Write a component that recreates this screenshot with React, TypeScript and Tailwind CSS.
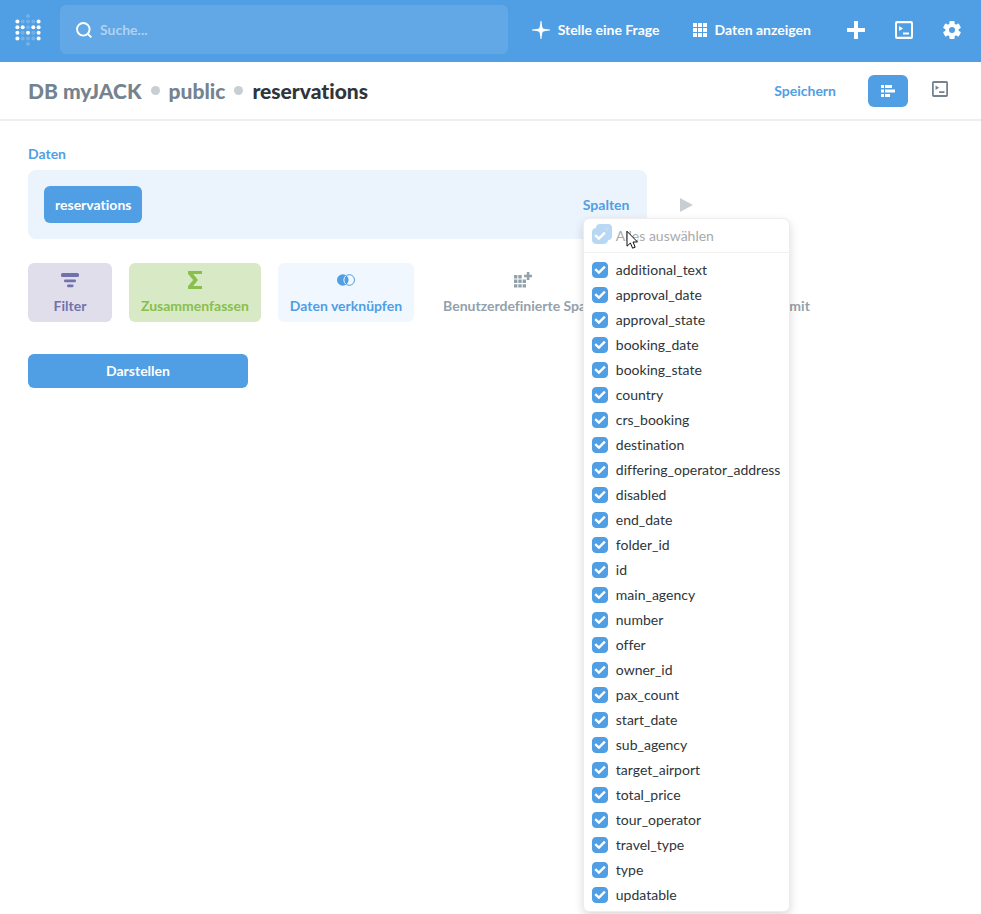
import { ReactNode, useState } from "react";
import clsx from "clsx";

const COLUMNS = [
  "additional_text",
  "approval_date",
  "approval_state",
  "booking_date",
  "booking_state",
  "country",
  "crs_booking",
  "destination",
  "differing_operator_address",
  "disabled",
  "end_date",
  "folder_id",
  "id",
  "main_agency",
  "number",
  "offer",
  "owner_id",
  "pax_count",
  "start_date",
  "sub_agency",
  "target_airport",
  "total_price",
  "tour_operator",
  "travel_type",
  "type",
  "updatable",
];

const LOGO_ROWS = ["  o  ", "XoooX", "XXoXX", "XoXoX", "XoooX", "  o  "];

function LogoIcon() {
  return (
    <svg width="26" height="32" viewBox="0 0 26 32" fill="#fff">
      {LOGO_ROWS.map((row, y) =>
        row
          .split("")
          .map((dot, x) =>
            dot === " " ? null : (
              <circle
                key={`${x}-${y}`}
                cx={2.4 + x * 5.3}
                cy={2 + y * 5.6}
                r="2"
                opacity={dot === "X" ? 1 : 0.2}
              />
            ),
          ),
      )}
    </svg>
  );
}

function SearchIcon() {
  return (
    <svg
      className="shrink-0"
      width="16"
      height="16"
      viewBox="0 0 16 16"
      fill="none"
      stroke="#fff"
      strokeWidth="1.9"
    >
      <circle cx="7.3" cy="7.3" r="6.3" />
      <path d="M11.6 11.6 15.4 15.4" />
    </svg>
  );
}

function SparkIcon() {
  return (
    <svg width="18" height="18" viewBox="0 0 18 18" fill="currentColor">
      <path d="M8.5 0h1C9.9 4 10.2 6.200 10.800 7.200 11.800 7.800 14 8.100 18 8.500v1C14 9.900 11.800 10.200 10.800 10.800 10.200 11.800 9.900 14 9.500 18h-1C8.100 14 7.800 11.800 7.200 10.800 6.200 10.200 4 9.900 0 9.500v-1C4 8.100 6.200 7.800 7.200 7.200 7.800 6.200 8.100 4 8.500 0Z" />
    </svg>
  );
}

function GridIcon() {
  return (
    <svg width="14" height="14" viewBox="0 0 14 14" fill="currentColor">
      {[0, 5, 10].map((y) =>
        [0, 5, 10].map((x) => <rect key={`${x}-${y}`} x={x} y={y} width="4" height="4" />),
      )}
    </svg>
  );
}

function PlusIcon() {
  return (
    <svg width="18" height="18" viewBox="0 0 18 18" fill="currentColor">
      <path d="M7 0h4v7h7v4h-7v7H7v-7H0V7h7z" />
    </svg>
  );
}

function SqlIcon({ size = 18 }: { size?: number }) {
  return (
    <svg width={size} height={size} viewBox="0 0 18 18" fill="currentColor">
      <path
        fillRule="evenodd"
        d="M2 0h14a2 2 0 0 1 2 2v14a2 2 0 0 1-2 2H2a2 2 0 0 1-2-2V2a2 2 0 0 1 2-2zm0 2.200v13.600h14V2.200z"
      />
      <path d="M4 5 8 7.500 4 10z" />
      <path d="M8 11.5h6v2H8z" />
    </svg>
  );
}

function GearIcon() {
  return (
    <svg width="18" height="18" viewBox="0 0 18 18" fill="currentColor">
      {[0, 60, 120].map((angle) => (
        <rect
          key={angle}
          x="6.4"
          y="0"
          width="5.2"
          height="18"
          rx="1"
          transform={`rotate(${angle} 9 9)`}
        />
      ))}
      <circle cx="9" cy="9" r="6.7" />
      <circle cx="9" cy="9" r="3" fill="#509ee3" />
    </svg>
  );
}

function NotebookIcon() {
  return (
    <svg width="14" height="12" viewBox="0 0 14 12" fill="currentColor">
      <path d="M0 0h3v3H0zM4 0h7v3H4zM0 4.6h3v3H0zM4 4.6h10v3H4zM0 9h3v3H0zM4 9h5v3H4z" />
    </svg>
  );
}

function FilterIcon() {
  return (
    <svg width="18" height="18" viewBox="0 0 18 18" fill="currentColor">
      <rect x="0" y="2" width="18" height="4" rx="1.5" />
      <rect x="3" y="8.6" width="12" height="2.6" rx="1.2" />
      <rect x="6" y="13.5" width="6.5" height="2.8" rx="1.2" />
    </svg>
  );
}

function SumIcon() {
  return (
    <svg width="18" height="18" viewBox="0 0 18 18" fill="currentColor">
      <path d="M2 0H16V3H7.2L12 9L7.2 15H16V18H2V15.2L7.2 9L2 2.8Z" />
    </svg>
  );
}

function JoinIcon() {
  return (
    <svg width="18" height="18" viewBox="0 0 18 18">
      <circle cx="12.2" cy="9" r="5.3" fill="none" stroke="currentColor" strokeWidth="1" />
      <circle cx="5.8" cy="9" r="5.8" fill="currentColor" />
      <path d="M9.2 4.6a5.3 5.3 0 0 0 0 8.8" fill="none" stroke="#f1f7ff" strokeWidth="1" />
    </svg>
  );
}

function AddColumnIcon() {
  return (
    <svg width="18" height="18" viewBox="0 0 18 18" fill="currentColor">
      <path d="M0 4h3.4v3.4H0zM4.3 4h3.4v3.4H4.3zM0 8.6h3.4V12H0zM4.3 8.6h3.4V12H4.3zM8.6 8.6H12V12H8.6zM0 13.2h3.4v3.2H0zM4.3 13.2h3.4v3.2H4.3zM8.6 13.2H12v3.2H8.6z" />
      <path d="M12.8 1h2.6v2.7H18v2.6h-2.6v2.6h-2.6V6.3h-2.7V3.7h2.7z" />
    </svg>
  );
}

function SortIcon() {
  return (
    <svg width="18" height="18" viewBox="0 0 18 18" fill="currentColor">
      <path d="M2 2h8v2H2zM2 8h6v2H2zM2 14h4v2H2zM13 2h2v10h2l-3 4-3-4h2z" />
    </svg>
  );
}

function LimitIcon() {
  return (
    <svg width="18" height="18" viewBox="0 0 18 18" fill="currentColor">
      <path d="M2 2h14v2H2zM2 7h14v2H2zM4 12h2v2H4zM8 12h2v2H8zM12 12h2v2h-2z" />
    </svg>
  );
}

function CursorIcon() {
  return (
    <svg width="13" height="20" viewBox="0 0 13 20" fill="#fff" stroke="#111" strokeWidth="1">
      <path d="M1 1.3V16.2L4.4 13 6.6 18.2 9.2 17.2 7 12H11.5Z" />
    </svg>
  );
}

interface CheckProps {
  id: string;
  checked: boolean;
  disabled?: boolean;
  onChange?: () => void;
}

function Check({ id, checked, disabled, onChange }: CheckProps) {
  return (
    <span className="relative block size-4">
      <input
        id={id}
        type="checkbox"
        className="block size-4 appearance-none rounded border border-[#b8bbc3] bg-white checked:border-[#509ee3] checked:bg-[#509ee3]"
        checked={checked}
        disabled={disabled}
        onChange={onChange}
      />
      {checked && (
        <svg
          className="pointer-events-none absolute inset-0"
          width="16"
          height="16"
          viewBox="0 0 16 16"
          fill="none"
          stroke="#fff"
          strokeWidth="2.4"
        >
          <path d="M3.2 7.2 6.9 10.6 12.9 4.7" />
        </svg>
      )}
    </span>
  );
}

function ColumnPicker() {
  const [hidden, setHidden] = useState<string[]>([]);

  const toggle = (name: string) => {
    setHidden(
      hidden.includes(name) ? hidden.filter((item) => item !== name) : [...hidden, name],
    );
  };

  return (
    <div className="absolute top-full left-0 z-10 rounded-md border border-[#eeecec] bg-white shadow-[0_4px_10px_rgba(0,0,0,0.15)]">
      <div className="relative border-b border-[#f0f0f0] px-2 pt-[7px] pb-1.5">
        <label htmlFor="all" className="flex items-center gap-2 text-sm leading-5">
          <span className="relative block size-4">
            <span className="absolute -top-1 left-1 size-4 rounded bg-[#b9d8f4]" />
            <span className="absolute inset-0 rounded bg-white" />
            <span className="relative block opacity-40">
              <Check id="all" checked={hidden.length === 0} disabled />
            </span>
          </span>
          <span className="text-[#a8aaac]">Alles auswählen</span>
        </label>
        <span className="pointer-events-none absolute top-[11px] left-[42px]">
          <CursorIcon />
        </span>
      </div>
      <ul className="pt-[5px] pb-[3px]">
        {COLUMNS.map((name) => (
          <li key={name}>
            <label
              htmlFor={name}
              className="flex h-[25px] items-center gap-2 pr-[9px] pl-2 text-sm whitespace-nowrap text-[#2e353b]"
            >
              <Check id={name} checked={!hidden.includes(name)} onChange={() => toggle(name)} />
              {name}
            </label>
          </li>
        ))}
      </ul>
    </div>
  );
}

interface ActionButtonProps {
  icon: ReactNode;
  label: string;
  className: string;
}

function ActionButton({ icon, label, className }: ActionButtonProps) {
  return (
    <button
      type="button"
      className={clsx(
        "flex h-[59px] min-w-[84px] shrink-0 flex-col items-center gap-[5px] rounded-md px-3 pt-2 text-sm leading-6 font-bold whitespace-nowrap",
        className,
      )}
    >
      {icon}
      {label}
    </button>
  );
}

export default function App() {
  return (
    <div className="min-h-screen overflow-x-hidden bg-white font-['Lato','Liberation_Sans',sans-serif] text-sm text-[#2e353b] [font-variant-ligatures:none]">
      <header className="flex h-[62px] items-center bg-[#509ee3] pr-5 pb-0.5 pl-[15px] text-white">
        <a href="#" aria-label="Startseite" className="mr-[19px] shrink-0">
          <LogoIcon />
        </a>
        <label className="mr-6 -mt-px flex h-[49px] max-w-[800px] flex-1 items-center gap-2 rounded-md bg-[#62a8e6] px-4">
          <SearchIcon />
          <input
            type="text"
            aria-label="Suche"
            placeholder="Suche..."
            className="w-full min-w-0 bg-transparent font-bold text-white outline-none placeholder:text-[#b0d2f2]"
          />
        </label>
        <nav className="ml-auto flex shrink-0 items-center font-bold whitespace-nowrap">
          <a href="#" className="mr-[33px] flex items-center gap-2">
            <SparkIcon />
            Stelle eine Frage
          </a>
          <a href="#" className="mr-9 flex items-center gap-2">
            <GridIcon />
            Daten anzeigen
          </a>
          <div className="flex items-center gap-[30px]">
            <button type="button" aria-label="Neu">
              <PlusIcon />
            </button>
            <button type="button" aria-label="SQL">
              <SqlIcon />
            </button>
            <button type="button" aria-label="Einstellungen">
              <GearIcon />
            </button>
          </div>
        </nav>
      </header>

      <div className="flex h-[59px] items-center justify-between border-b-2 border-[#eeeeee] pr-[33px] pl-7">
        <h1 className="flex items-center gap-[9px] text-[21px] font-black">
          <a href="#" className="text-[#74838f]">
            DB myJACK
          </a>
          <span className="size-[9px] rounded-full bg-[#c7cfd4]" />
          <a href="#" className="text-[#74838f]">
            public
          </a>
          <span className="size-[9px] rounded-full bg-[#c7cfd4]" />
          <span>reservations</span>
        </h1>
        <div className="flex items-center">
          <button type="button" className="mr-8 font-bold text-[#509ee3]">
            Speichern
          </button>
          <button
            type="button"
            aria-label="Editor"
            className="mr-6 flex h-8 w-10 items-center justify-center rounded-md bg-[#509ee3] text-white"
          >
            <NotebookIcon />
          </button>
          <button type="button" aria-label="SQL anzeigen" className="mb-1 text-[#74838f]">
            <SqlIcon size={16} />
          </button>
        </div>
      </div>

      <main className="px-7 pt-[23px]">
        <h2 className="mb-1.5 leading-5 font-bold text-[#509ee3]">Daten</h2>
        <div className="flex items-center gap-8">
          <div className="flex w-[66.9%] items-center justify-between rounded-lg bg-[#ebf4fc] p-4">
            <button
              type="button"
              className="h-[37px] rounded-md bg-[#509ee3] px-[11px] font-bold text-white"
            >
              reservations
            </button>
            <div className="relative">
              <button
                type="button"
                className="block h-[26px] w-12 text-left font-bold text-[#509ee3]"
              >
                Spalten
              </button>
              <ColumnPicker />
            </div>
          </div>
          <button type="button" aria-label="Vorschau" className="text-[#c7cfd4]">
            <svg width="14" height="14" viewBox="0 0 14 14" fill="currentColor">
              <path d="M1 0 14 7 1 14Z" />
            </svg>
          </button>
        </div>

        <div className="mt-6 flex gap-[17px]">
          <ActionButton
            icon={<FilterIcon />}
            label="Filter"
            className="bg-[#e0deeb] text-[#7172ad]"
          />
          <ActionButton
            icon={<SumIcon />}
            label="Zusammenfassen"
            className="bg-[#d8e9c5] text-[#88bf4d]"
          />
          <ActionButton
            icon={<JoinIcon />}
            label="Daten verknüpfen"
            className="bg-[#f1f7ff] text-[#509ee3]"
          />
          <ActionButton
            icon={<AddColumnIcon />}
            label="Benutzerdefinierte Spalte"
            className="text-[#93a1ab]"
          />
          <ActionButton icon={<SortIcon />} label="Sortieren" className="text-[#93a1ab]" />
          <ActionButton icon={<LimitIcon />} label="Zeilenlimit" className="text-[#93a1ab]" />
        </div>

        <button
          type="button"
          className="mt-8 h-[34px] min-w-[220px] rounded-md bg-[#509ee3] px-4 font-bold text-white"
        >
          Darstellen
        </button>
      </main>
    </div>
  );
}
